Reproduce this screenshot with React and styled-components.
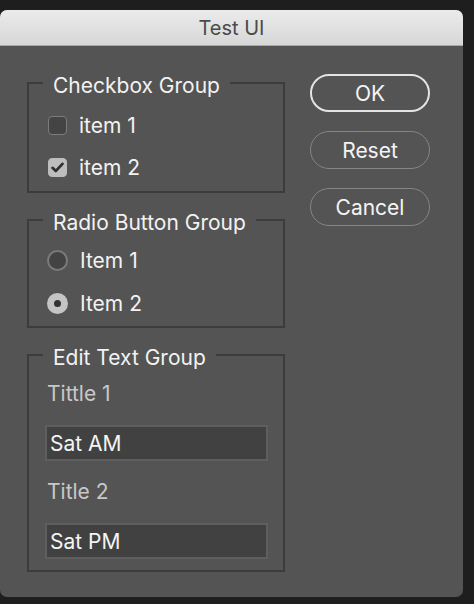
import React from "react";
import styled, { createGlobalStyle } from "styled-components";

const GlobalStyle = createGlobalStyle`
  html, body {
    margin: 0;
    padding: 0;
    background: #1e1e1e;
  }
  body {
    font-family: Inter, "Liberation Sans", Arial, sans-serif;
  }
`

const Screen = styled.div`
  width: 474px;
  height: 604px;
  padding-top: 10px;
  box-sizing: border-box;
  overflow: hidden;
`

const Window = styled.div`
  width: 463px;
  height: 587px;
  border-radius: 7px;
  background: #545454;
  overflow: hidden;
  display: flex;
  flex-direction: column;
`

const TitleBar = styled.div`
  height: 35px;
  flex: none;
  background: linear-gradient(#ebebeb, #d7d7d7);
  border-bottom: 1px solid #a8a8a8;
  display: flex;
  align-items: center;
  justify-content: center;
  color: #4a4a4a;
  font-size: 20px;
`

const Content = styled.div`
  display: flex;
  gap: 25px;
  padding: 22px 0 0 27px;
`

const LeftColumn = styled.div`
  width: 258px;
  display: flex;
  flex-direction: column;
  gap: 12px;
`

const Group = styled.fieldset`
  margin: 0;
  min-width: 0;
  border: 2px solid #3c3c3c;
  padding: ${props => props.$top}px 14px ${props => props.$bottom}px;
  display: flex;
  flex-direction: column;
  gap: ${props => props.$gap}px;
`

const Legend = styled.legend`
  padding: 6px 10px 0;
  line-height: 24px;
  font-size: 21px;
  color: #f2f2f2;
`

const OptionRow = styled.label`
  display: flex;
  align-items: center;
  gap: 12px;
  height: 28px;
  padding-left: 5px;
  font-size: 21px;
  color: #f2f2f2;
`

const CheckBox = styled.span`
  width: 19px;
  height: 19px;
  box-sizing: border-box;
  border-radius: 4px;
  border: 1.5px solid ${props => (props.$checked ? "#bdbdbd" : "#7c7c7c")};
  background: ${props => (props.$checked ? "#bdbdbd" : "#444444")};
  display: flex;
  align-items: center;
  justify-content: center;
`

const Radio = styled.span`
  width: 21px;
  height: 21px;
  box-sizing: border-box;
  border-radius: 50%;
  border: 2px solid ${props => (props.$checked ? "#c4c4c4" : "#7a7a7a")};
  background: ${props => (props.$checked ? "#c4c4c4" : "#434343")};
  display: flex;
  align-items: center;
  justify-content: center;
  margin-left: -1px;

  &::after {
    content: "";
    display: ${props => (props.$checked ? "block" : "none")};
    width: 7px;
    height: 7px;
    border-radius: 50%;
    background: #333333;
  }
`

const FieldLabel = styled.div`
  line-height: 24px;
  font-size: 21px;
  color: #c8c8c8;
  padding-left: 4px;
`

const TextField = styled.div`
  width: 223px;
  height: 36px;
  box-sizing: border-box;
  margin-left: 2px;
  border: 2px solid #5e5e5e;
  background: #414141;
  display: flex;
  align-items: center;
  padding-left: 3px;
  font-size: 21px;
  color: #f4f4f4;
`

const ButtonColumn = styled.div`
  width: 120px;
  margin-top: 6px;
  display: flex;
  flex-direction: column;
  gap: 19px;
`

const Button = styled.button`
  height: 38px;
  box-sizing: border-box;
  border-radius: 19px;
  border: ${props => (props.$primary ? "2px solid #e4e4e4" : "1.5px solid #858585")};
  background: transparent;
  color: #f4f4f4;
  font-family: inherit;
  font-size: 21px;
  padding: 0;
`

function Check() {
  return (
    <svg width="13" height="11" viewBox="0 0 13 11">
      <path d="M1.5 5.8 L4.8 9 L11.5 1.8" fill="none" stroke="#2e2e2e" strokeWidth="2.6" strokeLinecap="round" strokeLinejoin="round" />
    </svg>
  )
}

export default function App() {
  return (
    <Screen>
      <GlobalStyle />
      <Window>
        <TitleBar>Test UI</TitleBar>
        <Content>
          <LeftColumn>
            <Group $top={13} $gap={14} $bottom={10}>
              <Legend>Checkbox Group</Legend>
              <OptionRow>
                <CheckBox />
                item 1
              </OptionRow>
              <OptionRow>
                <CheckBox $checked>
                  <Check />
                </CheckBox>
                item 2
              </OptionRow>
            </Group>
            <Group $top={11} $gap={15} $bottom={9}>
              <Legend>Radio Button Group</Legend>
              <OptionRow>
                <Radio />
                Item 1
              </OptionRow>
              <OptionRow>
                <Radio $checked />
                Item 2
              </OptionRow>
            </Group>
            <Group $top={12} $gap={19} $bottom={11}>
              <Legend>Edit Text Group</Legend>
              <FieldLabel>Tittle 1</FieldLabel>
              <TextField>Sat AM</TextField>
              <FieldLabel>Title 2</FieldLabel>
              <TextField>Sat PM</TextField>
            </Group>
          </LeftColumn>
          <ButtonColumn>
            <Button $primary>OK</Button>
            <Button>Reset</Button>
            <Button>Cancel</Button>
          </ButtonColumn>
        </Content>
      </Window>
    </Screen>
  )
}
